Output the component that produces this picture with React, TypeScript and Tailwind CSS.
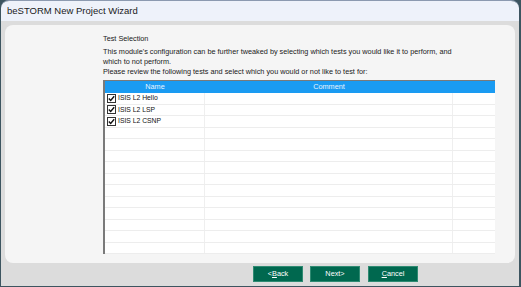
import React from "react";

const rows = ["ISIS L2 Hello", "ISIS L2 LSP", "ISIS L2 CSNP"];

function Check() {
  return (
    <span className="w-[9px] h-[9px] border border-[#333] bg-white flex items-center justify-center shrink-0">
      <svg width="7" height="7" viewBox="0 0 7 7">
        <path d="M0.8 3.4 L2.7 5.4 L6.2 1.2" fill="none" stroke="#111" strokeWidth="1.4" />
      </svg>
    </span>
  );
}

function Btn({ children }: { children: React.ReactNode }) {
  return (
    <button className="w-[50px] h-[16px] bg-[#00684f] border border-[#2f8a72] text-white text-[7.3px] flex items-center justify-center">
      {children}
    </button>
  );
}

export default function App() {
  const empty = Array.from({ length: 11 });
  return (
    <div className="w-[521px] h-[287px] bg-[#3d5560] overflow-hidden" style={{ fontFamily: '"Liberation Sans", Arial, sans-serif' }}>
      <div className="ml-[1px] w-[518px] h-[286px] rounded-t-[8px] overflow-hidden flex flex-col border-t border-[#8c9ab0]">
        <div className="h-[20px] bg-[#eef2fa] flex items-center pl-[6px] text-[9.5px] text-[#1a1a1a] shrink-0">
          beSTORM New Project Wizard
        </div>
        <div className="flex-1 bg-[#dcdcdc] px-[4px] pt-[4px] flex flex-col">
          <div className="h-[238px] bg-[#f5f5f5] rounded-[8px] pl-[98px] pt-[9px] flex flex-col text-[#1a1a1a] text-[7.3px] whitespace-nowrap">
            <div className="leading-[10px]">Test Selection</div>
            <div className="leading-[10px] mt-[3px]">
              <div>This module's configuration can be further tweaked by selecting which tests you would like it to perform, and</div>
              <div>which to not perform.</div>
            </div>
            <div className="leading-[10.5px]">
              Please review the following tests and select which you would or not like to test for:
            </div>
            <div className="mt-[2.5px] w-[392px] bg-white border-l-2 border-t border-[#7a7a7a] flex flex-col">
              <div className="h-[12px] bg-[#1a9bf2] flex text-[7.3px] text-[#e8f4ff] shrink-0">
                <div className="w-[100px] flex items-center justify-center">Name</div>
                <div className="w-[248px] flex items-center justify-center">Comment</div>
                <div className="flex-1" />
              </div>
              {rows.map((r) => (
                <div key={r} className="h-[11.5px] flex border-b border-[#ededed] shrink-0">
                  <div className="w-[100px] flex items-center gap-[2px] pl-[2px] text-[6.8px] text-[#111] border-r border-[#efefef]">
                    <Check />
                    <span>{r}</span>
                  </div>
                  <div className="w-[248px] border-r border-[#efefef]" />
                  <div className="flex-1" />
                </div>
              ))}
              {empty.map((_, i) => (
                <div key={i} className="h-[11.5px] flex border-b border-[#ededed] shrink-0">
                  <div className="w-[100px] border-r border-[#efefef]" />
                  <div className="w-[248px] border-r border-[#efefef]" />
                  <div className="flex-1" />
                </div>
              ))}
            </div>
          </div>
          <div className="flex pl-[248px] mt-[3px]">
            <Btn>
              &lt;<span className="underline">B</span>ack
            </Btn>
            <div className="ml-[7px]">
              <Btn>Next&gt;</Btn>
            </div>
            <div className="ml-[8px]">
              <Btn>
                <span className="underline">C</span>ancel
              </Btn>
            </div>
          </div>
        </div>
      </div>
    </div>
  );
}
